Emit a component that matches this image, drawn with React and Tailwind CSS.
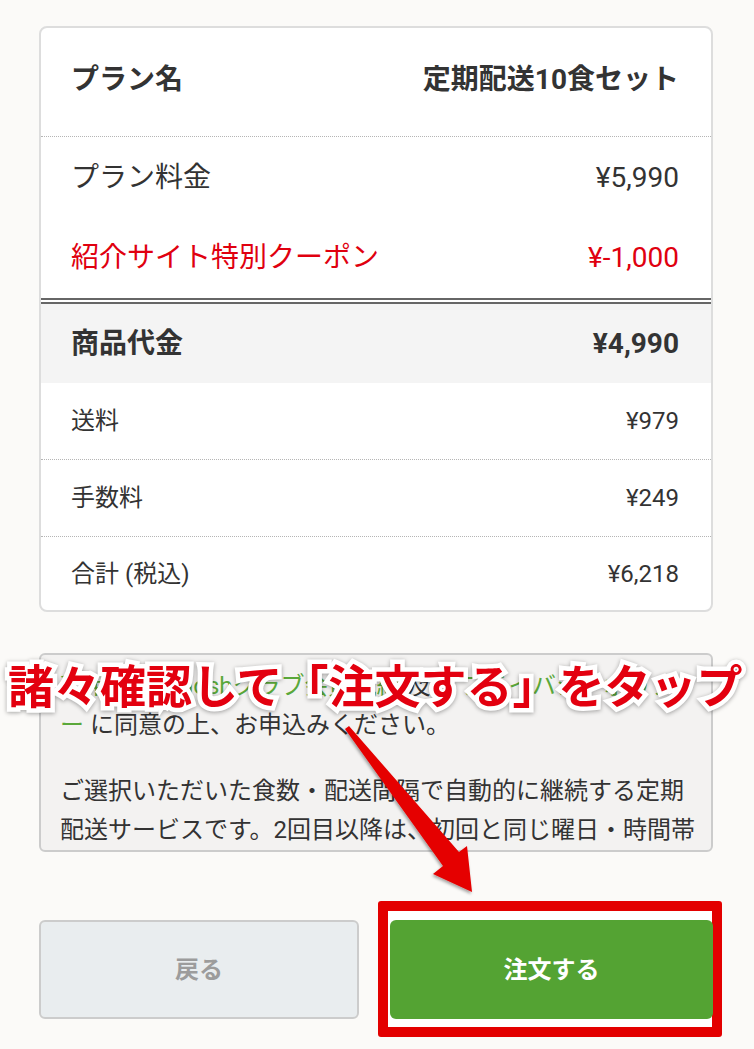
import React from 'react'

const rows = [
  { label: 'プラン料金', value: '¥5,990', h: 'h-[81px]', size: 'text-[28px]', tone: 'text-[#333]' },
  { label: '紹介サイト特別クーポン', value: '¥-1,000', h: 'h-[86px] border-b-[6px] border-double border-[#666]', size: 'text-[28px]', tone: 'text-[#e0000f]' },
]

const feeRows = [
  { label: '送料', value: '¥979', h: 'h-[77px] border-b border-dotted border-[#b5b5b5]' },
  { label: '手数料', value: '¥249', h: 'h-[77px] border-b border-dotted border-[#b5b5b5]' },
  { label: '合計 (税込)', value: '¥6,218', h: 'h-[73px]' },
]

const OrderSummary = () => (
  <div className="overflow-hidden rounded-[8px] border-2 border-[#dddddd] bg-white">
    <div className="flex h-[109px] items-center justify-between border-b border-dotted border-[#b5b5b5] pl-[30px] pr-[32px] pb-[5px] text-[28px] font-bold text-[#333]">
      <span>プラン名</span>
      <span>定期配送10食セット</span>
    </div>
    {rows.map((row) => (
      <div key={row.label} className={`flex items-center justify-between pl-[30px] pr-[32px] ${row.h} ${row.size} ${row.tone}`}>
        <span>{row.label}</span>
        <span>{row.value}</span>
      </div>
    ))}
    <div className="flex h-[79px] items-center justify-between bg-[#f4f4f4] pl-[30px] pr-[32px] text-[28px] font-bold text-[#333]">
      <span>商品代金</span>
      <span>¥4,990</span>
    </div>
    {feeRows.map((row) => (
      <div key={row.label} className={`flex items-center justify-between pl-[30px] pr-[32px] text-[24px] text-[#333] ${row.h}`}>
        <span>{row.label}</span>
        <span>{row.value}</span>
      </div>
    ))}
  </div>
)

const Terms = () => (
  <div className="mt-[41px] h-[199px] overflow-hidden rounded-[6px] border-2 border-[#cccccc] bg-[#f3f2f1] px-[19px] pt-[12px] text-[24px] leading-[39px] text-[#333]">
    <p className="whitespace-nowrap">
      <span className="text-[#5aa83a]">利用規約・noshクラブ会員規約</span> 及び <span className="text-[#5aa83a]">プライバシーポリシ</span>
      <br />
      <span className="text-[#5aa83a]">ー</span> に同意の上、お申込みください。
    </p>
    <p className="mt-[27px] whitespace-nowrap">
      ご選択いただいた食数・配送間隔で自動的に継続する定期
      <br />
      配送サービスです。2回目以降は、初回と同じ曜日・時間帯
    </p>
  </div>
)

const Actions = () => (
  <div className="mt-[68px] flex gap-[31px]">
    <button type="button" className="flex h-[99px] w-[320px] items-center justify-center rounded-[6px] border-2 border-[#cccccc] bg-[#e9edef] text-[24px] font-bold text-[#9c9c9c]">
      戻る
    </button>
    <div className="relative h-[99px] w-[323px]">
      <div className="absolute -left-[12px] -right-[9px] -top-[19px] -bottom-[18px] rounded-[3px] border-[10px] border-[#e30000] bg-white" />
      <button type="button" className="relative flex h-full w-full items-center justify-center rounded-[6px] bg-[#54a333] text-[24px] font-bold text-white">
        注文する
      </button>
    </div>
  </div>
)

const App = () => (
  <div className="relative h-[1049px] overflow-hidden bg-[#fbfaf8] font-['Roboto','Noto_Sans_CJK_JP',sans-serif]">
    <div className="ml-[39px] w-[674px] pt-[26px]">
      <OrderSummary />
      <Terms />
      <Actions />
    </div>

    {/* annotation */}
    <div className="pointer-events-none absolute left-[8px] top-[660px] whitespace-nowrap font-['Noto_Sans_CJK_JP',sans-serif] text-[46px] font-bold leading-none text-[#e3000f] [-webkit-text-stroke:9px_white] [paint-order:stroke_fill] [filter:drop-shadow(0_1px_2px_rgba(0,0,0,0.35))]">
      諸々確認して「注文する」をタップ
    </div>
    <svg className="pointer-events-none absolute left-0 top-0" width="754" height="1049" viewBox="0 0 754 1049">
      <defs>
        <filter id="arrowShadow" x="-20%" y="-20%" width="140%" height="140%">
          <feDropShadow dx="-1" dy="2" stdDeviation="1.5" floodColor="#000" floodOpacity="0.35" />
        </filter>
      </defs>
      <polygon
        points="345,729 349,726 459,852 467,846 472,892 433,874 443,866"
        fill="#e50000"
        filter="url(#arrowShadow)"
      />
    </svg>
  </div>
)

export default App
